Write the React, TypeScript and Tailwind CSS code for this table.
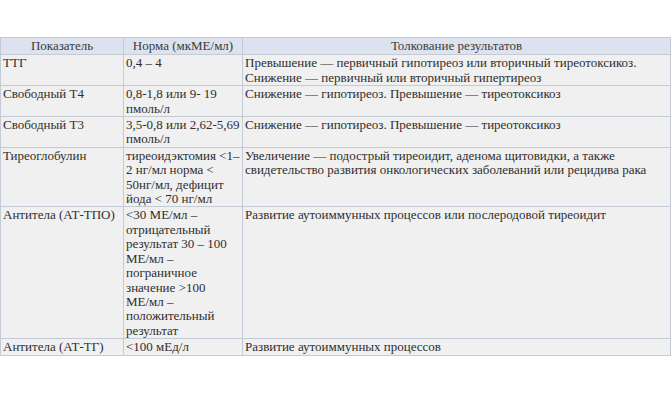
import React from 'react';

type Row = {
  name: string;
  norm: string[];
  notes: string[];
};

const rows: Row[] = [
  {
    name: 'ТТГ',
    norm: ['0,4 – 4'],
    notes: [
      'Превышение — первичный гипотиреоз или вторичный тиреотоксикоз.',
      'Снижение — первичный или вторичный гипертиреоз',
    ],
  },
  {
    name: 'Свободный Т4',
    norm: ['0,8-1,8 или 9- 19', 'пмоль/л'],
    notes: ['Снижение — гипотиреоз. Превышение — тиреотоксикоз'],
  },
  {
    name: 'Свободный Т3',
    norm: ['3,5-0,8 или 2,62-5,69', 'пмоль/л'],
    notes: ['Снижение — гипотиреоз. Превышение — тиреотоксикоз'],
  },
  {
    name: 'Тиреоглобулин',
    norm: ['тиреоидэктомия <1–', '2 нг/мл норма <', '50нг/мл, дефицит', 'йода < 70 нг/мл'],
    notes: [
      'Увеличение — подострый тиреоидит, аденома щитовидки, а также',
      'свидетельство развития онкологических заболеваний или рецидива рака',
    ],
  },
  {
    name: 'Антитела (АТ-ТПО)',
    norm: [
      '<30 МЕ/мл –',
      'отрицательный',
      'результат 30 – 100',
      'МЕ/мл –',
      'пограничное',
      'значение >100',
      'МЕ/мл –',
      'положительный',
      'результат',
    ],
    notes: ['Развитие аутоиммунных процессов или послеродовой тиреоидит'],
  },
  {
    name: 'Антитела (АТ-ТГ)',
    norm: ['<100 мЕд/л'],
    notes: ['Развитие аутоиммунных процессов'],
  },
];

const Lines = ({ items }: { items: string[] }) => (
  <>
    {items.map((t, i) => (
      <div key={i} className="whitespace-nowrap">
        {t}
      </div>
    ))}
  </>
);

export default function App() {
  return (
    <div className="w-[671px] h-[403px] bg-white pt-[37px] font-['Liberation_Serif'] text-[13px] leading-[14.4px] text-[#2e2e2e]">
      <table className="w-full table-fixed border-collapse">
        <colgroup>
          <col className="w-[123px]" />
          <col className="w-[119px]" />
          <col />
        </colgroup>
        <thead>
          <tr className="bg-[#dde3ee] text-[#3a3a3a]">
            <th className="border border-[#c3cbd6] font-normal text-center pt-[1px] pb-[1px]">Показатель</th>
            <th className="border border-[#c3cbd6] font-normal text-center pt-[1px] pb-[1px]">Норма (мкМЕ/мл)</th>
            <th className="border border-[#c3cbd6] font-normal text-center pt-[1px] pb-[1px]">Толкование результатов</th>
          </tr>
        </thead>
        <tbody>
          {rows.map((r) => (
            <tr key={r.name} className="bg-[#f0f0f0] align-top">
              <td className="border border-[#c3cbd6] px-[2px] pt-[1px] pb-0 whitespace-nowrap">{r.name}</td>
              <td className="border border-[#c3cbd6] px-[2px] pt-[1px] pb-0">
                <Lines items={r.norm} />
              </td>
              <td className="border border-[#c3cbd6] px-[2px] pt-[1px] pb-0">
                <Lines items={r.notes} />
              </td>
            </tr>
          ))}
        </tbody>
      </table>
    </div>
  );
}
